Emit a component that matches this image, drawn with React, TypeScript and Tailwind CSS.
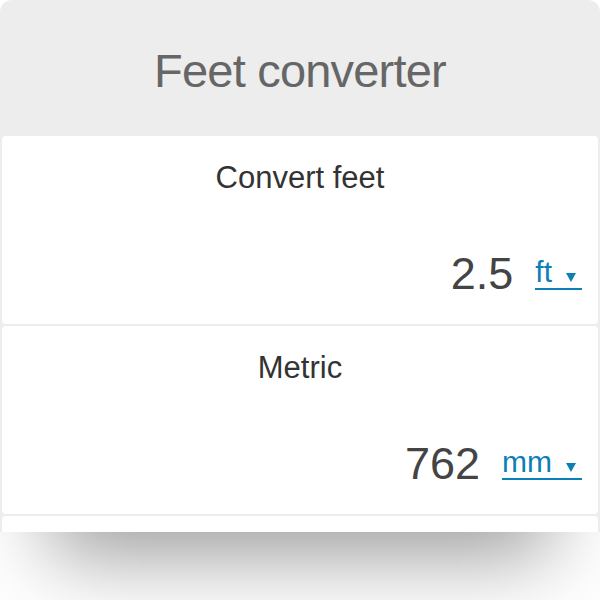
import React from "react";

type Row = { label: string; value: string; unit: string };

const rows: Row[] = [
  { label: "Convert feet", value: "2.5", unit: "ft" },
  { label: "Metric", value: "762", unit: "mm" },
];

function UnitPicker({ unit }: { unit: string }) {
  return (
    <button
      type="button"
      className="ml-[22px] inline-flex items-baseline gap-[14px] border-b-2 border-[#0b80b6] pr-[6px] align-[7px] text-[30px] leading-[23px] text-[#0b80b6]"
    >
      <span>{unit}</span>
      <svg width="10" height="9" viewBox="0 0 10 9" className="mb-[6px]">
        <path d="M0 0 H10 L5 9 Z" fill="#0b80b6" />
      </svg>
    </button>
  );
}

function ConverterRow({ row }: { row: Row }) {
  return (
    <div className="flex h-[188px] shrink-0 flex-col rounded-[4px] bg-white pt-[24px]">
      <div className="text-center text-[31px] leading-[36px] text-[#333]">{row.label}</div>
      <div className="mt-[52px] pr-[16px] text-right text-[45px] leading-[52px] text-[#444]">
        <span>{row.value}</span>
        <UnitPicker unit={row.unit} />
      </div>
    </div>
  );
}

export default function App() {
  return (
    <div
      className="h-[600px] w-[600px] overflow-hidden bg-white"
      style={{ fontFamily: '"Liberation Sans", Arial, sans-serif' }}
    >
      <div className="flex h-[532px] flex-col overflow-hidden rounded-t-[12px] bg-[#ededed] shadow-[0_73px_78px_-50px_rgba(0,0,0,0.4)]">
        <header className="h-[136px] shrink-0 pt-[43px] text-center">
          <h1 className="text-[47px] leading-[56px] tracking-[-0.8px] text-[#666]">Feet converter</h1>
        </header>
        <div className="flex flex-col gap-[2px] px-[2px]">
          {rows.map((r) => (
            <ConverterRow key={r.label} row={r} />
          ))}
          <div className="h-[188px] shrink-0 rounded-[4px] bg-white" />
        </div>
      </div>
    </div>
  );
}
